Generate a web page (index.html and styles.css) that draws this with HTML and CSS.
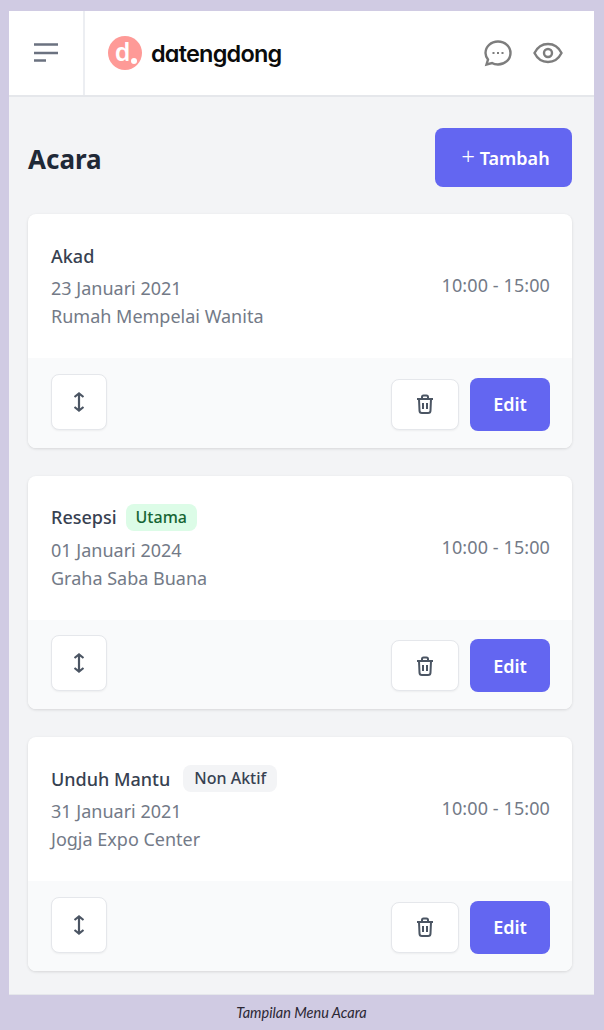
FILE: index.html
```html
<!DOCTYPE html>
<html lang="id">
<head>
  <meta charset="UTF-8">
  <meta name="viewport" content="width=device-width, initial-scale=1.0">
  <title>Tampilan Menu Acara</title>
  <link rel="stylesheet" href="styles.css">
</head>
<body>
  <div class="frame">
    <header class="topbar">
      <button class="menu-btn" aria-label="Menu">
        <svg width="24" height="19" viewBox="0 0 24 19" fill="none" stroke="#6b7280" stroke-width="2.400">
          <path d="M0 1.500h24M0 10h24M0 17.500h12"/>
        </svg>
      </button>
      <div class="brand">
        <span class="brand-mark">d<i class="brand-dot"></i></span>
        <span class="brand-name">datengdong</span>
      </div>
      <div class="top-icons">
        <svg width="30" height="30" viewBox="0 0 30 30" fill="none" stroke="#7d7d7d" stroke-width="2.400">
          <path d="M15 3.500c7 0 12.500 5 12.500 11.500S22 26.500 15 26.500c-2.500 0-4.500-.5-6-1.500l-5.500 1.500L5 21.500C3.500 19.500 2.500 17.500 2.500 15 2.500 8.500 8 3.500 15 3.500z"/>
          <path d="M9.500 15h2M14 15h2M18.500 15h2" stroke-width="2.200"/>
        </svg>
        <svg width="30" height="30" viewBox="0 0 30 30" fill="none" stroke="#7d7d7d" stroke-width="2.400">
          <path d="M1.500 15C4.500 9 9 6 15 6s10.500 3 13.500 9c-3 6-7.500 9-13.500 9S4.500 21 1.500 15z"/>
          <circle cx="15" cy="15" r="4"/>
        </svg>
      </div>
    </header>

    <main class="content">
      <div class="page-head">
        <h1>Acara</h1>
        <button class="btn-add"><span class="plus">+</span> Tambah</button>
      </div>

      <section class="card">
        <div class="card-body">
          <div class="info">
            <div class="title-row"><h2>Akad</h2></div>
            <p>23 Januari 2021</p>
            <p>Rumah Mempelai Wanita</p>
          </div>
          <div class="time">10:00 - 15:00</div>
        </div>
        <div class="card-foot">
          <button class="btn-sort" aria-label="Urutkan">
            <svg width="12" height="20" viewBox="0 0 12 20" fill="none" stroke="#4b5563" stroke-width="2.200"><path d="M6 1.500v17M1.500 5L6 1.500 10.500 5M1.500 15L6 18.500l4.500-3.500"/></svg>
          </button>
          <div class="actions">
            <button class="btn-del" aria-label="Hapus">
              <svg width="18" height="20" viewBox="0 0 18 20" fill="none" stroke="#4b5563" stroke-width="2"><path d="M1 5h16M6 5V3a1.500 1.500 0 0 1 1.500-1.500h3A1.500 1.500 0 0 1 12 3v2M3 5l.5 11.500A2.500 2.500 0 0 0 6 19h6a2.500 2.500 0 0 0 2.500-2.500L15 5M7 9v6M11 9v6"/></svg>
            </button>
            <button class="btn-edit">Edit</button>
          </div>
        </div>
      </section>

      <section class="card">
        <div class="card-body">
          <div class="info">
            <div class="title-row"><h2>Resepsi</h2><span class="badge badge-green">Utama</span></div>
            <p>01 Januari 2024</p>
            <p>Graha Saba Buana</p>
          </div>
          <div class="time">10:00 - 15:00</div>
        </div>
        <div class="card-foot">
          <button class="btn-sort" aria-label="Urutkan">
            <svg width="12" height="20" viewBox="0 0 12 20" fill="none" stroke="#4b5563" stroke-width="2.200"><path d="M6 1.500v17M1.500 5L6 1.500 10.500 5M1.500 15L6 18.500l4.500-3.500"/></svg>
          </button>
          <div class="actions">
            <button class="btn-del" aria-label="Hapus">
              <svg width="18" height="20" viewBox="0 0 18 20" fill="none" stroke="#4b5563" stroke-width="2"><path d="M1 5h16M6 5V3a1.500 1.500 0 0 1 1.500-1.500h3A1.500 1.500 0 0 1 12 3v2M3 5l.5 11.500A2.500 2.500 0 0 0 6 19h6a2.500 2.500 0 0 0 2.500-2.500L15 5M7 9v6M11 9v6"/></svg>
            </button>
            <button class="btn-edit">Edit</button>
          </div>
        </div>
      </section>

      <section class="card">
        <div class="card-body">
          <div class="info">
            <div class="title-row"><h2>Unduh Mantu</h2><span class="badge badge-gray">Non Aktif</span></div>
            <p>31 Januari 2021</p>
            <p>Jogja Expo Center</p>
          </div>
          <div class="time">10:00 - 15:00</div>
        </div>
        <div class="card-foot">
          <button class="btn-sort" aria-label="Urutkan">
            <svg width="12" height="20" viewBox="0 0 12 20" fill="none" stroke="#4b5563" stroke-width="2.200"><path d="M6 1.500v17M1.500 5L6 1.500 10.500 5M1.500 15L6 18.500l4.500-3.500"/></svg>
          </button>
          <div class="actions">
            <button class="btn-del" aria-label="Hapus">
              <svg width="18" height="20" viewBox="0 0 18 20" fill="none" stroke="#4b5563" stroke-width="2"><path d="M1 5h16M6 5V3a1.500 1.500 0 0 1 1.500-1.500h3A1.500 1.500 0 0 1 12 3v2M3 5l.5 11.500A2.500 2.500 0 0 0 6 19h6a2.500 2.500 0 0 0 2.500-2.500L15 5M7 9v6M11 9v6"/></svg>
            </button>
            <button class="btn-edit">Edit</button>
          </div>
        </div>
      </section>
    </main>
  </div>
  <p class="caption">Tampilan Menu Acara</p>
</body>
</html>
```

FILE: styles.css
```css
* { box-sizing: border-box; }
html, body { height: 100%; }
body { margin: 0; padding: 11px 10px 0 9px; background: #d0cbe3; font-family: "Noto Sans", "Open Sans", sans-serif; overflow: hidden; }
button { font-family: inherit; cursor: pointer; padding: 0; }
h1, h2, p { margin: 0; }

.frame { height: 984px; background: #f3f4f6; border-bottom: 1px solid #e5e7eb; }

.topbar { display: flex; align-items: center; height: 86px; background: #fff; border-bottom: 2px solid #e5e7eb; }
.menu-btn { display: flex; align-items: center; justify-content: center; width: 76px; height: 84px; padding: 0 1px 2px 0; background: none; border: 0; border-right: 2px solid #eceef2; }
.brand { display: flex; align-items: center; gap: 9px; margin-left: 23px; flex: 1; }
.brand-mark { position: relative; display: flex; align-items: center; justify-content: center; width: 34px; height: 34px; padding: 0 5px 3px 0; border-radius: 50%; background: #fe9a97; color: #fff; font-size: 25px; font-weight: 600; line-height: 1; }
.brand-dot { position: absolute; right: 5px; bottom: 6px; width: 6px; height: 6px; border-radius: 50%; background: #fff; }
.brand-name { font-family: "Inter", sans-serif; font-feature-settings: "cv11"; font-size: 23.500px; font-weight: 600; color: #0b0b0b; letter-spacing: -0.8px; }
.top-icons { display: flex; gap: 20px; margin-right: 31px; }

.content { padding: 31px 22px 0 19px; }
.page-head { display: flex; align-items: center; justify-content: space-between; height: 59px; margin-bottom: 27px; }
h1 { padding-top: 3px; font-size: 26px; font-weight: 700; color: #1f2937; }
.btn-add { width: 137px; height: 59px; padding: 0 0 2px 4px; border: 0; border-radius: 8px; background: #6366f1; color: #fff; font-size: 18px; font-weight: 600; }
.plus { font-weight: 300; font-size: 24px; line-height: 1; }

.card { height: 233.500px; margin-bottom: 28px; background: #fff; border-radius: 8px; box-shadow: 0 1px 3px rgba(0, 0, 0, 0.12); overflow: hidden; }
.card-body { display: flex; justify-content: space-between; align-items: center; height: 144px; padding: 0 22px 0 23px; }
.info { margin-top: -1px; }
.title-row { display: flex; align-items: center; gap: 11px; height: 30px; margin-bottom: 3.500px; }
h2 { font-size: 18px; font-weight: 500; color: #374151; }
.info p { font-size: 18px; line-height: 28px; color: #737a87; }
.time { font-size: 18px; letter-spacing: 0.1px; color: #737a87; margin-top: -2px; }
.badge { padding: 0 11px; height: 27px; line-height: 27px; border-radius: 8px; font-size: 16px; font-weight: 500; }
.badge-green { margin-left: -2px; padding: 0 10px; background: #dcfce7; color: #166534; }
.badge-gray { margin-left: 2px; background: #f3f4f6; color: #374151; }

.card-foot { display: flex; justify-content: space-between; align-items: center; height: 90px; padding: 0 22px 0 23px; background: #f9fafb; }
.btn-sort { display: flex; align-items: center; justify-content: center; width: 56px; height: 56px; margin-top: -3px; background: #fff; border: 1px solid #e5e7eb; border-radius: 8px; box-shadow: 0 1px 2px rgba(0, 0, 0, 0.05); }
.actions { display: flex; align-items: center; gap: 11px; margin-top: 2px; }
.btn-del { display: flex; align-items: center; justify-content: center; width: 68px; height: 51px; background: #fff; border: 1px solid #e5e7eb; border-radius: 8px; box-shadow: 0 1px 2px rgba(0, 0, 0, 0.05); }
.btn-edit { width: 80px; height: 53px; border: 0; border-radius: 8px; background: #6366f1; color: #fff; font-size: 18px; font-weight: 600; }

.caption { margin-top: 9px; text-align: center; font-family: "Lato", sans-serif; font-style: italic; font-size: 14.500px; color: #2b2733; }
```
